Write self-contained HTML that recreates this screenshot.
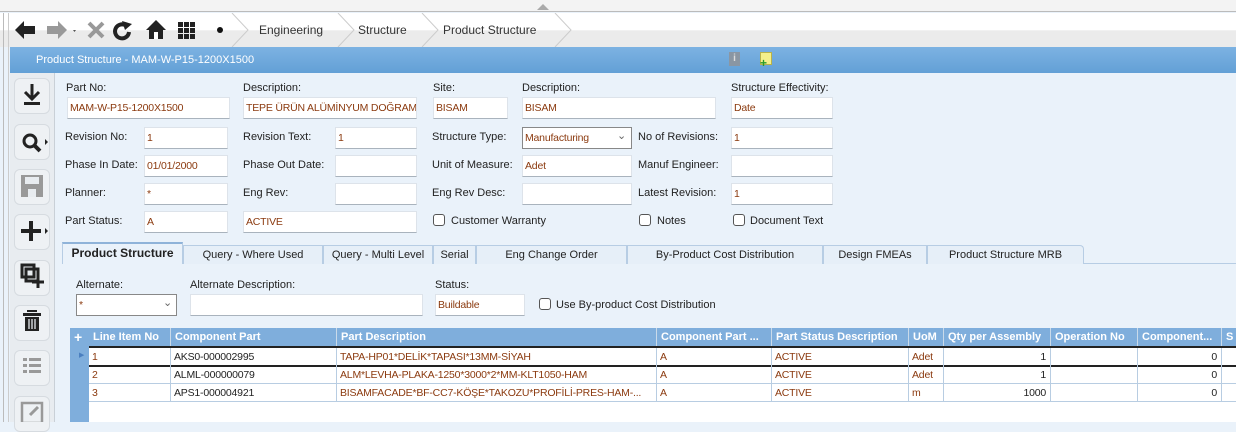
<!DOCTYPE html>
<html><head><meta charset="utf-8"><style>
*{box-sizing:border-box;margin:0;padding:0}
body{width:1236px;height:422px;overflow:hidden;position:relative;background:#eaf2fa;font-family:"Liberation Sans","DejaVu Sans",sans-serif;font-size:11px;color:#222}
.a{position:absolute}
.l{position:absolute;font-size:11px;color:#222;white-space:nowrap}
.i{position:absolute;height:22px;background:#fff;border:1px solid #dde3ea;border-bottom:1px solid #a9b3bd;color:#8b3a0f;font-size:10.5px;letter-spacing:-0.2px;padding:4px 2px;white-space:nowrap;overflow:hidden}
.cb{position:absolute;width:12px;height:12px;border:1px solid #555;border-radius:3px;background:#fff}
.btn{position:absolute;left:14px;width:36px;height:36px;border:1px solid #d6dbe0;border-radius:6px;background:#eef1f4}
.tab{position:absolute;top:245px;height:19px;border:1px solid #b7cde4;border-bottom:none;background:#e6eff8;font-size:11px;text-align:center;line-height:18px;white-space:nowrap}
.hd{position:absolute;top:328px;height:18px;color:#fff;font-weight:bold;font-size:11px;line-height:18px;padding-left:4px;border-right:1px solid #c9daea;white-space:nowrap;overflow:hidden}
.c{position:absolute;height:18px;line-height:18px;font-size:10.5px;letter-spacing:-0.2px;padding-left:3px;border-right:1px solid #b8cde2;white-space:nowrap;overflow:hidden;color:#8b3a0f}
</style></head><body>
<div class="a" style="left:0;top:0;width:1236px;height:12px;background:#f3f3f3;border-bottom:1px solid #bbb"></div>
<div class="a" style="left:0;top:13px;width:1236px;height:34px;background:linear-gradient(#fff 0,#fff 50%,#ebebeb 52%,#ebebeb 100%)"></div>
<div class="a" style="left:537px;top:4px;width:0;height:0;border-left:6px solid transparent;border-right:6px solid transparent;border-bottom:6px solid #aaa"></div>
<div class="a" style="left:3px;top:13px;width:1px;height:409px;background:#bbb"></div>
<div class="a" style="left:8px;top:13px;width:1px;height:409px;background:#ccc"></div>
<svg class="a" style="left:12px;top:18px" width="230" height="24" viewBox="0 0 230 24">
<path d="M3 12 L12 3 V8 H23 V16 H12 V21Z" fill="#222"/>
<path d="M55 12 L46 3 V8 H35 V16 H46 V21Z" fill="#999"/>
<path d="M61 12 l3 0 -1.5 2z" fill="#555"/>
<path d="M77 5 L91 19 M91 5 L77 19" stroke="#999" stroke-width="4"/>
<path d="M113 7 A7 7 0 1 0 117 14" stroke="#222" stroke-width="4" fill="none"/><path d="M110 3 L120 6 L113 12Z" fill="#222"/>
<path d="M134 12 L144 2 L154 12 H151 V21 H137 V12Z" fill="#222"/><rect x="142" y="14" width="4" height="7" fill="#fff"/>
<g fill="#222"><rect x="166" y="4" width="5" height="5"/><rect x="172" y="4" width="5" height="5"/><rect x="178" y="4" width="5" height="5"/><rect x="166" y="10" width="5" height="5"/><rect x="172" y="10" width="5" height="5"/><rect x="178" y="10" width="5" height="5"/><rect x="166" y="16" width="5" height="5"/><rect x="172" y="16" width="5" height="5"/><rect x="178" y="16" width="5" height="5"/></g>
<circle cx="208" cy="12" r="3" fill="#111"/>
</svg>
<svg class="a" style="left:230px;top:13px" width="350" height="34"><path d="M2 0 L18 17 L2 34 M108 0 L124 17 L108 34 M192 0 L208 17 L192 34 M325 0 L341 17 L325 34" stroke="#ccc" fill="none"/></svg>
<div class="l" style="left:259px;top:23px;font-size:12px;color:#333">Engineering</div>
<div class="l" style="left:358px;top:23px;font-size:12px;color:#333">Structure</div>
<div class="l" style="left:443px;top:23px;font-size:12px;color:#333">Product Structure</div>
<div class="a" style="left:10px;top:47px;width:1226px;height:26px;background:linear-gradient(#7db2e2,#63a0d6)"></div>
<div class="l" style="left:36px;top:54px;color:#fff;font-size:11px">Product Structure - MAM-W-P15-1200X1500</div>
<div class="a" style="left:729px;top:52px;width:11px;height:14px;background:#8a96a3;color:#ddd;font-size:10px;text-align:center;line-height:14px;font-weight:bold">i</div>
<div class="a" style="left:760px;top:52px;width:12px;height:13px;background:#f4f08a;border:1px solid #b8b24a"></div>
<div class="l" style="left:760px;top:56px;color:#2a9a2a;font-weight:bold;font-size:12px">+</div>
<div class="a" style="left:10px;top:73px;width:45px;height:349px;background:#e8ecf0;border-right:1px solid #c9d0d7"></div>
<div class="btn" style="top:78px"></div><div class="btn" style="top:124px"></div><div class="btn" style="top:169px"></div><div class="btn" style="top:214px"></div><div class="btn" style="top:260px"></div><div class="btn" style="top:305px"></div><div class="btn" style="top:350px"></div><div class="btn" style="top:396px"></div>
<svg class="a" style="left:14px;top:78px" width="40" height="344">
<path d="M18 6 V20 M11 14 L18 21 L25 14" stroke="#222" stroke-width="3" fill="none"/><rect x="10" y="24" width="16" height="3" fill="#222"/>
<circle cx="16" cy="63" r="6" stroke="#222" stroke-width="3" fill="none"/><path d="M20 67 L26 73" stroke="#222" stroke-width="4"/><path d="M31 61 l3 3 -3 3z" fill="#222"/>
<rect x="7" y="97" width="22" height="22" fill="#999"/><rect x="11" y="99" width="14" height="7" fill="#e8ecf0"/><rect x="14" y="111" width="8" height="8" fill="#e8ecf0"/>
<path d="M7 153 H27 M17 143 V163" stroke="#222" stroke-width="4"/><path d="M31 150 l3 3 -3 3z" fill="#222"/>
<path d="M8 187 H20 V199 H8Z M12 191 H24 V203 H12Z" stroke="#222" stroke-width="3" fill="#e8ecf0"/><path d="M24 198 V210 M18 204 H30" stroke="#222" stroke-width="3"/>
<rect x="13" y="232" width="10" height="2" fill="#222"/><rect x="9" y="235" width="18" height="3" fill="#222"/><path d="M11 239 H25 V253 H11Z" fill="#222"/><path d="M15 241 V251 M18 241 V251 M21 241 V251" stroke="#e8ecf0" stroke-width="1.3"/>
<g fill="#999"><rect x="9" y="280" width="4" height="3"/><rect x="15" y="280" width="12" height="3"/><rect x="9" y="286" width="4" height="3"/><rect x="15" y="286" width="12" height="3"/><rect x="9" y="292" width="4" height="3"/><rect x="15" y="292" width="12" height="3"/></g>
<rect x="8" y="325" width="20" height="20" stroke="#999" stroke-width="2.5" fill="none"/><path d="M16 337 L24 329" stroke="#999" stroke-width="3"/>
</svg>
<div class="l" style="left:66px;top:82px">Part No:</div><div class="i" style="left:67px;top:97px;width:163px">MAM-W-P15-1200X1500</div>
<div class="l" style="left:243px;top:82px">Description:</div><div class="i" style="left:243px;top:97px;width:174px">TEPE ÜRÜN ALÜMİNYUM DOĞRAMA</div>
<div class="l" style="left:433px;top:82px">Site:</div><div class="i" style="left:433px;top:97px;width:75px">BISAM</div>
<div class="l" style="left:522px;top:82px">Description:</div><div class="i" style="left:522px;top:97px;width:194px">BISAM</div>
<div class="l" style="left:731px;top:82px">Structure Effectivity:</div><div class="i" style="left:731px;top:97px;width:102px">Date</div>
<div class="l" style="left:65px;top:131px">Revision No:</div><div class="i" style="left:144px;top:127px;width:84px">1</div>
<div class="l" style="left:243px;top:131px">Revision Text:</div><div class="i" style="left:335px;top:127px;width:82px">1</div>
<div class="l" style="left:432px;top:131px">Structure Type:</div><div class="i" style="left:522px;top:127px;width:110px;border:1px solid #888">Manufacturing</div><div class="l" style="left:617px;top:129px;color:#666">⌄</div>
<div class="l" style="left:638px;top:131px">No of Revisions:</div><div class="i" style="left:731px;top:127px;width:102px">1</div>
<div class="l" style="left:65px;top:159px">Phase In Date:</div><div class="i" style="left:144px;top:155px;width:84px">01/01/2000</div>
<div class="l" style="left:243px;top:159px">Phase Out Date:</div><div class="i" style="left:335px;top:155px;width:82px"></div>
<div class="l" style="left:432px;top:159px">Unit of Measure:</div><div class="i" style="left:522px;top:155px;width:110px">Adet</div>
<div class="l" style="left:638px;top:159px">Manuf Engineer:</div><div class="i" style="left:731px;top:155px;width:102px"></div>
<div class="l" style="left:65px;top:187px">Planner:</div><div class="i" style="left:144px;top:183px;width:84px">*</div>
<div class="l" style="left:243px;top:187px">Eng Rev:</div><div class="i" style="left:335px;top:183px;width:82px"></div>
<div class="l" style="left:432px;top:187px">Eng Rev Desc:</div><div class="i" style="left:522px;top:183px;width:110px"></div>
<div class="l" style="left:638px;top:187px">Latest Revision:</div><div class="i" style="left:731px;top:183px;width:102px">1</div>
<div class="l" style="left:65px;top:215px">Part Status:</div><div class="i" style="left:144px;top:211px;width:84px">A</div>
<div class="i" style="left:243px;top:211px;width:174px">ACTIVE</div>
<div class="cb" style="left:433px;top:214px"></div><div class="l" style="left:451px;top:215px">Customer Warranty</div>
<div class="cb" style="left:639px;top:214px"></div><div class="l" style="left:657px;top:215px">Notes</div>
<div class="cb" style="left:733px;top:214px"></div><div class="l" style="left:750px;top:215px">Document Text</div>
<div class="a" style="left:62px;top:263px;width:1174px;height:1px;background:#b7cde4"></div>
<div class="tab" style="left:62px;top:242px;height:22px;width:121px;background:#eaf2fa;font-weight:bold;font-size:12px;border-top:2px solid #8fb3d9">Product Structure</div>
<div class="tab" style="left:183px;width:140px">Query - Where Used</div>
<div class="tab" style="left:323px;width:110px">Query - Multi Level</div>
<div class="tab" style="left:433px;width:43px">Serial</div>
<div class="tab" style="left:476px;width:151px">Eng Change Order</div>
<div class="tab" style="left:627px;width:196px">By-Product Cost Distribution</div>
<div class="tab" style="left:823px;width:104px">Design FMEAs</div>
<div class="tab" style="left:927px;width:157px;border-radius:0 4px 0 0">Product Structure MRB</div>
<div class="a" style="left:62px;top:264px;width:1174px;height:158px;background:#eaf2fa"></div>
<div class="l" style="left:76px;top:279px">Alternate:</div><div class="i" style="left:76px;top:294px;width:101px;border:1px solid #888">*</div><div class="l" style="left:163px;top:296px;color:#666">⌄</div>
<div class="l" style="left:190px;top:279px">Alternate Description:</div><div class="i" style="left:190px;top:294px;width:233px"></div>
<div class="l" style="left:435px;top:279px">Status:</div><div class="i" style="left:435px;top:294px;width:90px">Buildable</div>
<div class="cb" style="left:539px;top:298px"></div><div class="l" style="left:556px;top:299px">Use By-product Cost Distribution</div>
<div class="a" style="left:70px;top:328px;width:1166px;height:94px;background:#fff"></div>
<div class="a" style="left:70px;top:328px;width:1166px;height:18px;background:#7faedc"></div>
<div class="a" style="left:70px;top:328px;width:19px;height:94px;background:#7faedc"></div>
<div class="l" style="left:74px;top:329px;color:#fff;font-weight:bold;font-size:14px">+</div>
<div class="l" style="left:79px;top:351px;color:#4a7fc0;font-size:7px">▶</div>
<div class="hd" style="left:89px;width:82px">Line Item No</div>
<div class="hd" style="left:171px;width:166px">Component Part</div>
<div class="hd" style="left:337px;width:320px">Part Description</div>
<div class="hd" style="left:657px;width:115px">Component Part ...</div>
<div class="hd" style="left:772px;width:137px">Part Status Description</div>
<div class="hd" style="left:909px;width:35px">UoM</div>
<div class="hd" style="left:944px;width:107px">Qty per Assembly</div>
<div class="hd" style="left:1051px;width:87px">Operation No</div>
<div class="hd" style="left:1138px;width:84px">Component...</div>
<div class="hd" style="left:1222px;width:20px">S</div>
<div class="a" style="left:89px;top:346px;width:1147px;height:2px;background:#222"></div>
<div class="a" style="left:89px;top:365px;width:1147px;height:2px;background:#222"></div>
<div class="a" style="left:89px;top:383px;width:1147px;height:1px;background:#b8cde2"></div>
<div class="a" style="left:89px;top:401px;width:1147px;height:1px;background:#b8cde2"></div>
<div class="c" style="left:89px;top:348px;width:82px">1</div><div class="c" style="left:171px;top:348px;width:166px;color:#222">AKS0-000002995</div><div class="c" style="left:337px;top:348px;width:320px">TAPA-HP01*DELİK*TAPASI*13MM-SİYAH</div><div class="c" style="left:657px;top:348px;width:115px">A</div><div class="c" style="left:772px;top:348px;width:137px">ACTIVE</div><div class="c" style="left:909px;top:348px;width:35px">Adet</div><div class="c" style="left:944px;top:348px;width:107px;text-align:right;padding-right:4px;color:#222">1</div><div class="c" style="left:1051px;top:348px;width:87px"></div><div class="c" style="left:1138px;top:348px;width:84px;text-align:right;padding-right:4px;color:#222">0</div>
<div class="c" style="left:89px;top:366px;width:82px">2</div><div class="c" style="left:171px;top:366px;width:166px;color:#222">ALML-000000079</div><div class="c" style="left:337px;top:366px;width:320px">ALM*LEVHA-PLAKA-1250*3000*2*MM-KLT1050-HAM</div><div class="c" style="left:657px;top:366px;width:115px">A</div><div class="c" style="left:772px;top:366px;width:137px">ACTIVE</div><div class="c" style="left:909px;top:366px;width:35px">Adet</div><div class="c" style="left:944px;top:366px;width:107px;text-align:right;padding-right:4px;color:#222">1</div><div class="c" style="left:1051px;top:366px;width:87px"></div><div class="c" style="left:1138px;top:366px;width:84px;text-align:right;padding-right:4px;color:#222">0</div>
<div class="c" style="left:89px;top:384px;width:82px">3</div><div class="c" style="left:171px;top:384px;width:166px;color:#222">APS1-000004921</div><div class="c" style="left:337px;top:384px;width:320px">BISAMFACADE*BF-CC7-KÖŞE*TAKOZU*PROFİLİ-PRES-HAM-...</div><div class="c" style="left:657px;top:384px;width:115px">A</div><div class="c" style="left:772px;top:384px;width:137px">ACTIVE</div><div class="c" style="left:909px;top:384px;width:35px">m</div><div class="c" style="left:944px;top:384px;width:107px;text-align:right;padding-right:4px;color:#222">1000</div><div class="c" style="left:1051px;top:384px;width:87px"></div><div class="c" style="left:1138px;top:384px;width:84px;text-align:right;padding-right:4px;color:#222">0</div>
</body></html>
